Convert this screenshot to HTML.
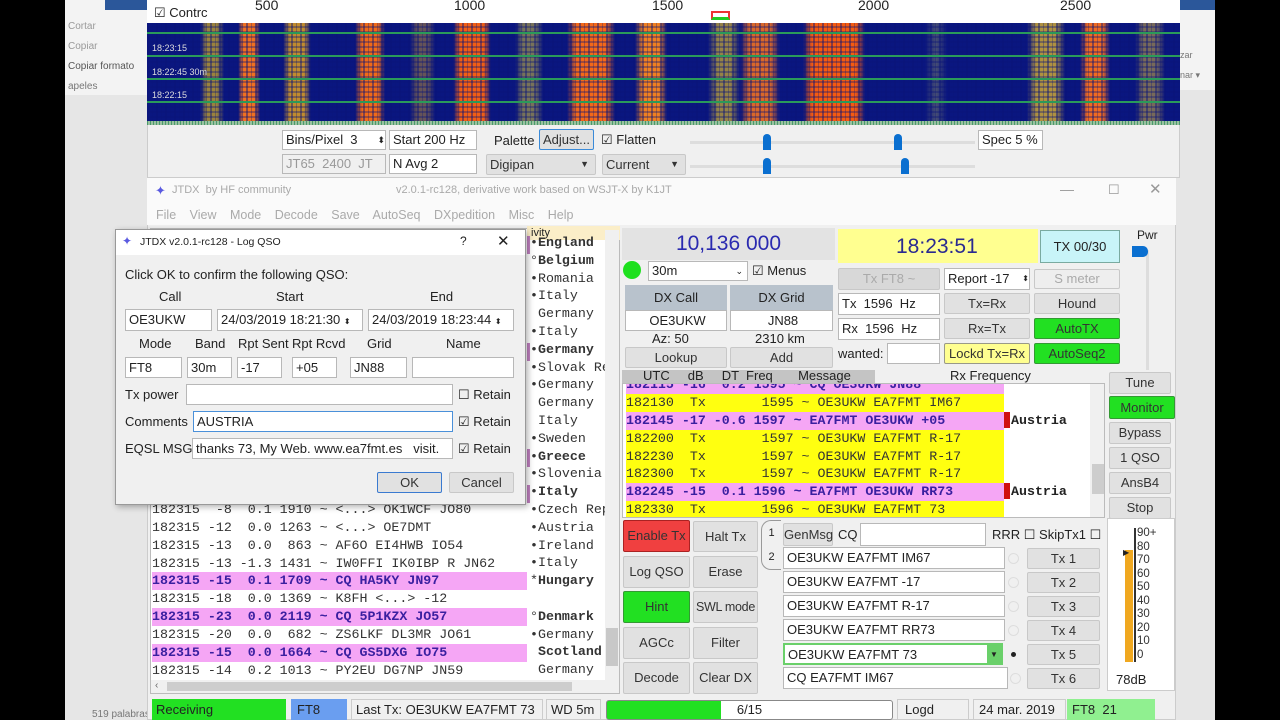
<!DOCTYPE html>
<html><head><meta charset="utf-8"><style>
*{box-sizing:border-box;margin:0;padding:0}
body{width:1280px;height:720px;overflow:hidden;background:#000;font-family:"Liberation Sans",sans-serif;font-size:13px;color:#222;position:relative}
.a{position:absolute}
.btn{position:absolute;background:#e1e1e1;border:1px solid #c8c8c8;text-align:center;font-size:13px;color:#333;border-radius:2px;white-space:nowrap}
.fld{position:absolute;background:#fff;border:1px solid #b8b8b8;font-size:13px;padding-left:3px;color:#222;white-space:nowrap;overflow:hidden}
.mono{font-family:"Liberation Mono","DejaVu Sans Mono",monospace;font-size:13.3px;white-space:pre}
.row{position:absolute;height:18px;line-height:18px}
.pk{background:#f5a6f5;color:#3a1fa0;font-weight:bold}
.yl{background:#ffff10;color:#333}
.stripe{position:absolute;top:23px;height:100px}
</style></head><body>
<div class="a" style="left:65px;top:0;width:1150px;height:720px;background:#e6e6e6"></div>
<div class="a" style="left:65px;top:0;width:82px;height:95px;background:#f3f3f3"></div>
<div class="a" style="left:68px;top:17px;font-size:10px;color:#999;line-height:20px">Cortar<br>Copiar<br><span style="color:#555">Copiar formato</span><br><span style="color:#777">apeles</span></div>
<div class="a" style="left:105px;top:0;width:42px;height:10px;background:#2b579a"></div>
<div class="a" style="left:1180px;top:0;width:35px;height:10px;background:#2b579a"></div>
<div class="a" style="left:1180px;top:10px;width:35px;height:80px;background:#f3f3f3;font-size:9px;color:#777;line-height:20px;padding-top:35px">zar<br>nar ▾</div>
<div class="a" style="left:92px;top:709px;font-size:10px;color:#777">519 palabras</div>

<div class="a" style="left:147px;top:0;width:1033px;height:178px;background:#f0f0f0;border:1px solid #ccc"></div>
<div class="a" style="left:147px;top:0;width:1033px;height:23px;background:#fff"></div>
<div class="a" style="left:154px;top:5px;font-size:13px">☑ Contrc</div>
<div class="a" style="left:255px;top:-3px;font-size:14px">500</div>
<div class="a" style="left:454px;top:-3px;font-size:14px">1000</div>
<div class="a" style="left:652px;top:-3px;font-size:14px">1500</div>
<div class="a" style="left:858px;top:-3px;font-size:14px">2000</div>
<div class="a" style="left:1060px;top:-3px;font-size:14px">2500</div>
<div class="a" style="left:711px;top:11px;width:19px;height:9px;border:2px solid #e33;border-bottom:3px solid #2c2"></div>
<div class="a" style="left:147px;top:23px;width:1033px;height:102px;background:#0a1680"></div>
<div class="stripe" style="left:200px;width:24px;background:linear-gradient(90deg,transparent,#d8b020 30%,#d8b020 70%,transparent);opacity:.7"></div>
<div class="stripe" style="left:238px;width:22px;background:linear-gradient(90deg,transparent,#f07020 25%,#f07020 75%,transparent)"></div>
<div class="stripe" style="left:283px;width:28px;background:linear-gradient(90deg,transparent,#e0a020 25%,#e0a020 75%,transparent);opacity:.85"></div>
<div class="stripe" style="left:355px;width:30px;background:linear-gradient(90deg,transparent,#f06a18 25%,#f06a18 75%,transparent)"></div>
<div class="stripe" style="left:410px;width:25px;background:linear-gradient(90deg,transparent,#c09030 30%,#c09030 70%,transparent);opacity:.5"></div>
<div class="stripe" style="left:453px;width:38px;background:linear-gradient(90deg,transparent,#f25e14 20%,#f25e14 80%,transparent)"></div>
<div class="stripe" style="left:515px;width:28px;background:linear-gradient(90deg,transparent,#c0b040 30%,#c0b040 70%,transparent);opacity:.6"></div>
<div class="stripe" style="left:567px;width:48px;background:linear-gradient(90deg,transparent,#f46818 20%,#f46818 80%,transparent)"></div>
<div class="stripe" style="left:635px;width:32px;background:linear-gradient(90deg,transparent,#f08020 25%,#f08020 75%,transparent)"></div>
<div class="stripe" style="left:708px;width:32px;background:linear-gradient(90deg,transparent,#d0b030 30%,#d0b030 70%,transparent);opacity:.7"></div>
<div class="stripe" style="left:740px;width:40px;background:linear-gradient(90deg,transparent,#f07020 25%,#f07020 75%,transparent);opacity:.9"></div>
<div class="stripe" style="left:803px;width:62px;background:linear-gradient(90deg,transparent,#f55a10 15%,#f55a10 85%,transparent)"></div>
<div class="stripe" style="left:925px;width:22px;background:linear-gradient(90deg,transparent,#a0a060 50%,transparent);opacity:.4"></div>
<div class="stripe" style="left:1027px;width:38px;background:linear-gradient(90deg,transparent,#d8b030 25%,#d8b030 75%,transparent);opacity:.8"></div>
<div class="stripe" style="left:1080px;width:30px;background:linear-gradient(90deg,transparent,#f06a20 25%,#f06a20 75%,transparent)"></div>
<div class="stripe" style="left:1135px;width:30px;background:linear-gradient(90deg,transparent,#c0a040 30%,#c0a040 70%,transparent);opacity:.6"></div>
<div class="a" style="left:147px;top:23px;width:1033px;height:100px;background:repeating-linear-gradient(90deg,rgba(10,20,120,.45) 0 2px,transparent 2px 5px,rgba(10,20,120,.3) 5px 6px,transparent 6px 9px),repeating-linear-gradient(0deg,rgba(10,20,120,.35) 0 2px,transparent 2px 5px)"></div>
<div class="a" style="left:147px;top:32px;width:1033px;height:2px;background:#2a9a5a"></div>
<div class="a" style="left:147px;top:55px;width:1033px;height:2px;background:#2a9a5a"></div>
<div class="a" style="left:147px;top:78px;width:1033px;height:2px;background:#2a9a5a"></div>
<div class="a" style="left:147px;top:101px;width:1033px;height:2px;background:#2a9a5a"></div>
<div class="a" style="left:147px;top:121px;width:1033px;height:4px;background:repeating-linear-gradient(90deg,#4a9a6a 0 1px,#9ac0a0 1px 3px)"></div>
<div class="a" style="left:152px;top:43px;font-size:9px;color:#ddd">18:23:15</div>
<div class="a" style="left:152px;top:67px;font-size:9px;color:#ddd">18:22:45 30m</div>
<div class="a" style="left:152px;top:90px;font-size:9px;color:#ddd">18:22:15</div>
<div class="fld" style="left:282px;top:130px;width:104px;height:20px;line-height:18px">Bins/Pixel&nbsp; 3 <span style="float:right;font-size:9px">⬍</span></div>
<div class="fld" style="left:389px;top:130px;width:88px;height:20px;line-height:18px">Start 200 Hz</div>
<div class="fld" style="left:282px;top:154px;width:104px;height:20px;line-height:18px;background:#f0f0f0;color:#999">JT65&nbsp; 2400&nbsp; JT</div>
<div class="fld" style="left:389px;top:154px;width:88px;height:20px;line-height:18px">N Avg 2</div>
<div class="a" style="left:494px;top:133px">Palette</div>
<div class="btn" style="left:539px;top:129px;width:55px;height:21px;line-height:19px;border:1px solid #3a8ad8">Adjust...</div>
<div class="a" style="left:601px;top:132px">☑ Flatten</div>
<div class="btn" style="left:486px;top:154px;width:110px;height:21px;line-height:19px;text-align:left;padding-left:3px">Digipan <span style="float:right;font-size:9px;padding-right:6px">▼</span></div>
<div class="btn" style="left:602px;top:154px;width:84px;height:21px;line-height:19px;text-align:left;padding-left:3px">Current <span style="float:right;font-size:9px;padding-right:6px">▼</span></div>
<div class="a" style="left:690px;top:141px;width:285px;height:3px;background:#ddd"></div>
<div class="a" style="left:690px;top:165px;width:285px;height:3px;background:#ddd"></div>
<div class="a" style="left:763px;top:134px;width:8px;height:16px;background:#0a6fd0;border-radius:4px 4px 0 0"></div>
<div class="a" style="left:894px;top:134px;width:8px;height:16px;background:#0a6fd0;border-radius:4px 4px 0 0"></div>
<div class="a" style="left:763px;top:158px;width:8px;height:16px;background:#0a6fd0;border-radius:4px 4px 0 0"></div>
<div class="a" style="left:901px;top:158px;width:8px;height:16px;background:#0a6fd0;border-radius:4px 4px 0 0"></div>
<div class="fld" style="left:978px;top:130px;width:65px;height:20px;line-height:18px">Spec 5 %</div>

<div class="a" style="left:147px;top:178px;width:1029px;height:542px;background:#f0f0f0;border:1px solid #ccc"></div>
<div class="a" style="left:147px;top:178px;width:1029px;height:47px;background:#fafafa"></div>
<div class="a" style="left:155px;top:183px;color:#5a5ae0">✦</div>
<div class="a" style="left:172px;top:184px;font-size:11px;color:#aaa">JTDX&nbsp; by HF community</div>
<div class="a" style="left:396px;top:184px;font-size:11px;color:#aaa">v2.0.1-rc128, derivative work based on WSJT-X by K1JT</div>
<div class="a" style="left:1060px;top:181px;color:#999;font-size:14px">—</div>
<div class="a" style="left:1108px;top:182px;color:#999;font-size:13px">☐</div>
<div class="a" style="left:1149px;top:180px;color:#999;font-size:15px">✕</div>
<div class="a" style="left:156px;top:208px;font-size:12.5px;color:#aaa;word-spacing:10px">File View Mode Decode Save AutoSeq DXpedition Misc Help</div>

<div class="a" style="left:150px;top:228px;width:470px;height:466px;background:#fff;border:1px solid #bbb"></div>
<div class="a" style="left:527px;top:226px;width:93px;height:14px;background:#fbeec8;font-size:11px;line-height:14px;padding-left:4px">ivity</div>
<div class="mono" style="position:absolute;left:530px;top:234px;line-height:17.8px;color:#333">•<b>England</b>
°<b>Belgium</b>
•Romania
•Italy
 Germany
•Italy
•<b>Germany</b>
•Slovak Re
•Germany
 Germany
 Italy
•Sweden
•<b>Greece</b>
•Slovenia
•<b>Italy</b>
•Czech Rep
•Austria
•Ireland
•Italy
*<b>Hungary</b>

°<b>Denmark</b>
•Germany
 <b>Scotland</b>
 Germany</div>
<div class="a" style="left:527px;top:236px;width:3px;height:18px;background:#c080c0"></div>
<div class="a" style="left:527px;top:343px;width:3px;height:18px;background:#c080c0"></div>
<div class="a" style="left:527px;top:449px;width:3px;height:18px;background:#c080c0"></div>
<div class="a" style="left:527px;top:485px;width:3px;height:18px;background:#c080c0"></div>
<div class="row mono" style="left:152px;top:501px;width:375px;color:#333">182315  -8  0.1 1910 ~ &lt;...&gt; OK1WCF JO80</div>
<div class="row mono" style="left:152px;top:519px;width:375px;color:#333">182315 -12  0.0 1263 ~ &lt;...&gt; OE7DMT</div>
<div class="row mono" style="left:152px;top:537px;width:375px;color:#333">182315 -13  0.0  863 ~ AF6O EI4HWB IO54</div>
<div class="row mono" style="left:152px;top:555px;width:375px;color:#333">182315 -13 -1.3 1431 ~ IW0FFI IK0IBP R JN62</div>
<div class="row mono pk" style="left:152px;top:572px;width:375px">182315 -15  0.1 1709 ~ CQ HA5KY JN97</div>
<div class="row mono" style="left:152px;top:590px;width:375px;color:#333">182315 -18  0.0 1369 ~ K8FH &lt;...&gt; -12</div>
<div class="row mono pk" style="left:152px;top:608px;width:375px">182315 -23  0.0 2119 ~ CQ 5P1KZX JO57</div>
<div class="row mono" style="left:152px;top:626px;width:375px;color:#333">182315 -20  0.0  682 ~ ZS6LKF DL3MR JO61</div>
<div class="row mono pk" style="left:152px;top:644px;width:375px">182315 -15  0.0 1664 ~ CQ GS5DXG IO75</div>
<div class="row mono" style="left:152px;top:662px;width:375px;color:#333">182315 -14  0.2 1013 ~ PY2EU DG7NP JN59</div>
<div class="a" style="left:605px;top:230px;width:14px;height:450px;background:#f0f0f0"></div>
<div class="a" style="left:606px;top:628px;width:12px;height:38px;background:#c8c8c8"></div>
<div class="a" style="left:151px;top:680px;width:468px;height:13px;background:#f0f0f0;font-size:10px;color:#666;padding-left:4px">‹</div>
<div class="a" style="left:167px;top:682px;width:405px;height:9px;background:#cdcdcd"></div>

<div class="a" style="left:115px;top:229px;width:411px;height:276px;background:#f0f0f0;border:1px solid #999;box-shadow:2px 2px 6px rgba(0,0,0,.3)"></div>
<div class="a" style="left:116px;top:230px;width:409px;height:25px;background:#fff"></div>
<div class="a" style="left:122px;top:234px;color:#5a5ae0;font-size:12px">✦</div>
<div class="a" style="left:140px;top:236px;font-size:10.5px">JTDX v2.0.1-rc128 - Log QSO</div>
<div class="a" style="left:460px;top:234px;font-size:12px">?</div>
<div class="a" style="left:497px;top:232px;font-size:15px">✕</div>
<div class="a" style="left:125px;top:267px">Click OK to confirm the following QSO:</div>
<div class="a" style="left:159px;top:289px">Call</div>
<div class="a" style="left:276px;top:289px">Start</div>
<div class="a" style="left:430px;top:289px">End</div>
<div class="fld" style="left:125px;top:309px;width:87px;height:22px;line-height:20px">OE3UKW</div>
<div class="fld" style="left:217px;top:309px;width:146px;height:22px;line-height:20px">24/03/2019 18:21:30 <span style="font-size:8px">⬍</span></div>
<div class="fld" style="left:368px;top:309px;width:146px;height:22px;line-height:20px">24/03/2019 18:23:44 <span style="font-size:8px">⬍</span></div>
<div class="a" style="left:139px;top:336px">Mode</div>
<div class="a" style="left:195px;top:336px">Band</div>
<div class="a" style="left:238px;top:336px">Rpt Sent</div>
<div class="a" style="left:292px;top:336px">Rpt Rcvd</div>
<div class="a" style="left:367px;top:336px">Grid</div>
<div class="a" style="left:446px;top:336px">Name</div>
<div class="fld" style="left:125px;top:357px;width:57px;height:21px;line-height:19px">FT8</div>
<div class="fld" style="left:187px;top:357px;width:45px;height:21px;line-height:19px">30m</div>
<div class="fld" style="left:237px;top:357px;width:45px;height:21px;line-height:19px">-17</div>
<div class="fld" style="left:292px;top:357px;width:45px;height:21px;line-height:19px">+05</div>
<div class="fld" style="left:350px;top:357px;width:57px;height:21px;line-height:19px">JN88</div>
<div class="fld" style="left:412px;top:357px;width:102px;height:21px"></div>
<div class="a" style="left:125px;top:387px">Tx power</div>
<div class="fld" style="left:186px;top:384px;width:267px;height:21px"></div>
<div class="a" style="left:458px;top:387px">☐ Retain</div>
<div class="a" style="left:125px;top:414px">Comments</div>
<div class="fld" style="left:193px;top:411px;width:260px;height:21px;line-height:19px;border-color:#4a90d9">AUSTRIA</div>
<div class="a" style="left:458px;top:414px">☑ Retain</div>
<div class="a" style="left:125px;top:441px">EQSL MSG</div>
<div class="fld" style="left:192px;top:438px;width:261px;height:21px;line-height:19px">thanks 73, My Web. www.ea7fmt.es&nbsp;&nbsp; visit.</div>
<div class="a" style="left:458px;top:441px">☑ Retain</div>
<div class="btn" style="left:377px;top:472px;width:65px;height:21px;line-height:19px;border:1px solid #3a7ad0">OK</div>
<div class="btn" style="left:449px;top:472px;width:65px;height:21px;line-height:19px">Cancel</div>

<div class="a" style="left:622px;top:228px;width:213px;height:32px;background:#e3e3e3;color:#2a2ab0;font-size:21px;text-align:center;line-height:32px">10,136 000</div>
<div class="a" style="left:838px;top:229px;width:200px;height:34px;background:#ffff90;color:#2a2a90;font-size:21px;line-height:36px;padding-left:58px">18:23:51</div>
<div class="a" style="left:1040px;top:230px;width:80px;height:33px;background:#c8f4f8;border:1px solid #7aaaa0;text-align:center;line-height:31px;font-size:13px">TX 00/30</div>
<div class="a" style="left:1137px;top:228px;font-size:12px">Pwr</div>
<div class="a" style="left:1146px;top:250px;width:3px;height:120px;background:#ddd"></div>
<div class="a" style="left:1132px;top:246px;width:16px;height:11px;background:#0a6fd0;border-radius:0 5px 5px 0"></div>
<div class="a" style="left:623px;top:261px;width:18px;height:18px;border-radius:50%;background:#1ee01e"></div>
<div class="fld" style="left:648px;top:261px;width:100px;height:20px;line-height:18px">30m <span style="float:right;padding-right:4px;font-size:9px">⌄</span></div>
<div class="a" style="left:752px;top:263px">☑ Menus</div>
<div class="btn" style="left:838px;top:268px;width:102px;height:22px;line-height:20px;color:#aaa;background:#d8d8d8">Tx FT8 ~</div>
<div class="fld" style="left:944px;top:268px;width:86px;height:22px;line-height:20px">Report -17 <span style="font-size:8px;float:right">⬍</span></div>
<div class="btn" style="left:1034px;top:269px;width:86px;height:20px;line-height:18px;color:#aaa;background:#eee">S meter</div>
<div class="a" style="left:625px;top:285px;width:102px;height:25px;background:#b8c2cc;text-align:center;line-height:25px">DX Call</div>
<div class="a" style="left:730px;top:285px;width:103px;height:25px;background:#b8c2cc;text-align:center;line-height:25px">DX Grid</div>
<div class="fld" style="left:625px;top:310px;width:102px;height:21px;line-height:19px;text-align:center">OE3UKW</div>
<div class="fld" style="left:730px;top:310px;width:103px;height:21px;line-height:19px;text-align:center">JN88</div>
<div class="a" style="left:652px;top:331px">Az: 50</div>
<div class="a" style="left:755px;top:331px">2310 km</div>
<div class="btn" style="left:625px;top:347px;width:102px;height:21px;line-height:19px">Lookup</div>
<div class="btn" style="left:730px;top:347px;width:103px;height:21px;line-height:19px">Add</div>
<div class="fld" style="left:838px;top:293px;width:102px;height:22px;line-height:20px">Tx&nbsp; 1596&nbsp; Hz</div>
<div class="fld" style="left:838px;top:318px;width:102px;height:22px;line-height:20px">Rx&nbsp; 1596&nbsp; Hz</div>
<div class="a" style="left:838px;top:346px">wanted:</div>
<div class="fld" style="left:887px;top:343px;width:53px;height:21px"></div>
<div class="btn" style="left:944px;top:293px;width:86px;height:21px;line-height:19px">Tx=Rx</div>
<div class="btn" style="left:944px;top:318px;width:86px;height:21px;line-height:19px">Rx=Tx</div>
<div class="btn" style="left:944px;top:343px;width:86px;height:21px;line-height:19px;background:#ffff90;border-color:#998">Lockd Tx=Rx</div>
<div class="btn" style="left:1034px;top:293px;width:86px;height:21px;line-height:19px">Hound</div>
<div class="btn" style="left:1034px;top:318px;width:86px;height:21px;line-height:19px;background:#22e022;border-color:#393">AutoTX</div>
<div class="btn" style="left:1034px;top:343px;width:86px;height:21px;line-height:19px;background:#22e022;border-color:#393">AutoSeq2</div>

<div class="a" style="left:622px;top:370px;width:253px;height:14px;background:#c4c4c4"></div>
<div class="a" style="left:643px;top:368px;white-space:pre;font-size:13px">UTC     dB     DT  Freq       Message</div>
<div class="a" style="left:950px;top:368px">Rx Frequency</div>
<div class="a" style="left:622px;top:383px;width:483px;height:135px;background:#fff;border:1px solid #bbb;overflow:hidden">
<div class="row mono pk" style="left:3px;top:-8px;width:378px">182115 -16  0.2 1595 ~ CQ OE3UKW JN88</div>
<div class="row mono yl" style="left:3px;top:10px;width:378px">182130  Tx       1595 ~ OE3UKW EA7FMT IM67</div>
<div class="row mono pk" style="left:3px;top:28px;width:378px">182145 -17 -0.6 1597 ~ EA7FMT OE3UKW +05</div>
<div class="row mono yl" style="left:3px;top:46px;width:378px">182200  Tx       1597 ~ OE3UKW EA7FMT R-17</div>
<div class="row mono yl" style="left:3px;top:64px;width:378px">182230  Tx       1597 ~ OE3UKW EA7FMT R-17</div>
<div class="row mono yl" style="left:3px;top:81px;width:378px">182300  Tx       1597 ~ OE3UKW EA7FMT R-17</div>
<div class="row mono pk" style="left:3px;top:99px;width:378px">182245 -15  0.1 1596 ~ EA7FMT OE3UKW RR73</div>
<div class="row mono yl" style="left:3px;top:117px;width:378px">182330  Tx       1596 ~ OE3UKW EA7FMT 73</div>
<div class="a" style="left:381px;top:28px;width:6px;height:16px;background:#d01010"></div>
<div class="a mono" style="left:388px;top:28px;font-weight:bold;line-height:18px">Austria</div>
<div class="a" style="left:381px;top:99px;width:6px;height:16px;background:#d01010"></div>
<div class="a mono" style="left:388px;top:99px;font-weight:bold;line-height:18px">Austria</div>
<div class="a" style="left:467px;top:0;width:16px;height:135px;background:#f0f0f0"></div>
<div class="a" style="left:469px;top:80px;width:12px;height:30px;background:#cdcdcd"></div>
</div>
<div class="btn" style="left:1109px;top:372px;width:62px;height:22px;line-height:20px">Tune</div>
<div class="btn" style="left:1109px;top:396px;width:66px;height:23px;line-height:21px;background:#22e022;border-color:#393">Monitor</div>
<div class="btn" style="left:1109px;top:422px;width:62px;height:22px;line-height:20px">Bypass</div>
<div class="btn" style="left:1109px;top:447px;width:62px;height:22px;line-height:20px">1 QSO</div>
<div class="btn" style="left:1109px;top:472px;width:62px;height:22px;line-height:20px">AnsB4</div>
<div class="btn" style="left:1109px;top:497px;width:62px;height:22px;line-height:20px">Stop</div>

<div class="btn" style="left:623px;top:520px;width:67px;height:32px;line-height:30px;background:#f04040;border-color:#a22">Enable Tx</div>
<div class="btn" style="left:693px;top:521px;width:65px;height:31px;line-height:29px">Halt Tx</div>
<div class="btn" style="left:623px;top:556px;width:67px;height:32px;line-height:30px">Log QSO</div>
<div class="btn" style="left:693px;top:556px;width:65px;height:32px;line-height:30px">Erase</div>
<div class="btn" style="left:623px;top:591px;width:67px;height:32px;line-height:30px;background:#22e022;border-color:#393">Hint</div>
<div class="btn" style="left:693px;top:591px;width:65px;height:32px;line-height:30px;font-size:12.5px;letter-spacing:-.3px">SWL mode</div>
<div class="btn" style="left:623px;top:627px;width:67px;height:32px;line-height:30px">AGCc</div>
<div class="btn" style="left:693px;top:627px;width:65px;height:32px;line-height:30px">Filter</div>
<div class="btn" style="left:623px;top:662px;width:67px;height:32px;line-height:30px">Decode</div>
<div class="btn" style="left:693px;top:662px;width:65px;height:32px;line-height:30px">Clear DX</div>
<div class="a" style="left:761px;top:520px;width:20px;height:50px;border:1px solid #999;border-right:none;border-radius:10px 0 0 10px;font-size:11px;line-height:24px;text-align:center">1<br>2</div>
<div class="btn" style="left:783px;top:523px;width:50px;height:23px;line-height:21px">GenMsg</div>
<div class="a" style="left:838px;top:527px">CQ</div>
<div class="fld" style="left:860px;top:523px;width:126px;height:23px"></div>
<div class="a" style="left:992px;top:527px">RRR ☐ SkipTx1 ☐</div>
<div class="fld" style="left:783px;top:547px;width:222px;height:22px;line-height:20px">OE3UKW EA7FMT IM67</div>
<div class="fld" style="left:783px;top:571px;width:222px;height:22px;line-height:20px">OE3UKW EA7FMT -17</div>
<div class="fld" style="left:783px;top:595px;width:222px;height:22px;line-height:20px">OE3UKW EA7FMT R-17</div>
<div class="fld" style="left:783px;top:619px;width:222px;height:22px;line-height:20px">OE3UKW EA7FMT RR73</div>
<div class="fld" style="left:783px;top:643px;width:220px;height:22px;line-height:20px;border:2px solid #6ad06a">OE3UKW EA7FMT 73<span style="position:absolute;right:0;top:0;width:14px;height:18px;background:#6ad06a;font-size:8px;text-align:center">▼</span></div>
<div class="fld" style="left:783px;top:667px;width:225px;height:22px;line-height:20px">CQ EA7FMT IM67</div>
<div class="a" style="left:1008px;top:553px;width:11px;height:11px;border:1px solid #ddd;border-radius:50%"></div>
<div class="a" style="left:1008px;top:577px;width:11px;height:11px;border:1px solid #ddd;border-radius:50%"></div>
<div class="a" style="left:1008px;top:601px;width:11px;height:11px;border:1px solid #ddd;border-radius:50%"></div>
<div class="a" style="left:1008px;top:625px;width:11px;height:11px;border:1px solid #ddd;border-radius:50%"></div>
<div class="a" style="left:1011px;top:652px;width:5px;height:5px;background:#222;border-radius:50%"></div>
<div class="a" style="left:1010px;top:673px;width:11px;height:11px;border:1px solid #ddd;border-radius:50%"></div>
<div class="btn" style="left:1027px;top:548px;width:73px;height:21px;line-height:19px">Tx 1</div>
<div class="btn" style="left:1027px;top:572px;width:73px;height:21px;line-height:19px">Tx 2</div>
<div class="btn" style="left:1027px;top:596px;width:73px;height:21px;line-height:19px">Tx 3</div>
<div class="btn" style="left:1027px;top:620px;width:73px;height:21px;line-height:19px">Tx 4</div>
<div class="btn" style="left:1027px;top:644px;width:73px;height:21px;line-height:19px">Tx 5</div>
<div class="btn" style="left:1027px;top:668px;width:73px;height:21px;line-height:19px">Tx 6</div>
<div class="a" style="left:1107px;top:518px;width:68px;height:173px;background:#fff;border:1px solid #ccc"></div>
<div class="a" style="left:1125px;top:550px;width:8px;height:112px;background:#f0a820"></div>
<div class="a" style="left:1123px;top:548px;font-size:8px">▶</div>
<div class="a" style="left:1134px;top:528px;width:2px;height:134px;background:#333"></div>
<div class="a" style="left:1137px;top:527px;font-size:11.5px;line-height:13.5px;color:#333">90+<br>80<br>70<br>60<br>50<br>40<br>30<br>20<br>10<br>0</div>
<div class="a" style="left:1116px;top:672px">78dB</div>

<div class="a" style="left:152px;top:699px;width:134px;height:21px;background:#22e022;line-height:21px;padding-left:4px">Receiving</div>
<div class="a" style="left:291px;top:699px;width:56px;height:21px;background:#6a9ef0;line-height:21px;padding-left:6px">FT8</div>
<div class="a" style="left:351px;top:699px;width:192px;height:21px;border:1px solid #ccc;line-height:19px;padding-left:4px">Last Tx: OE3UKW EA7FMT 73</div>
<div class="a" style="left:546px;top:699px;width:55px;height:21px;border:1px solid #ccc;line-height:19px;padding-left:4px">WD 5m</div>
<div class="a" style="left:606px;top:700px;width:287px;height:20px;border:1px solid #888;border-radius:3px;background:linear-gradient(90deg,#22e022 0 114px,#fff 114px);text-align:center;line-height:18px">6/15</div>
<div class="a" style="left:897px;top:699px;width:72px;height:21px;border:1px solid #ccc;line-height:19px;padding-left:7px">Logd</div>
<div class="a" style="left:973px;top:699px;width:93px;height:21px;border:1px solid #ccc;line-height:19px;padding-left:5px">24 mar. 2019</div>
<div class="a" style="left:1067px;top:699px;width:88px;height:21px;background:#90f090;line-height:21px;padding-left:5px">FT8&nbsp; 21</div>
</body></html>
